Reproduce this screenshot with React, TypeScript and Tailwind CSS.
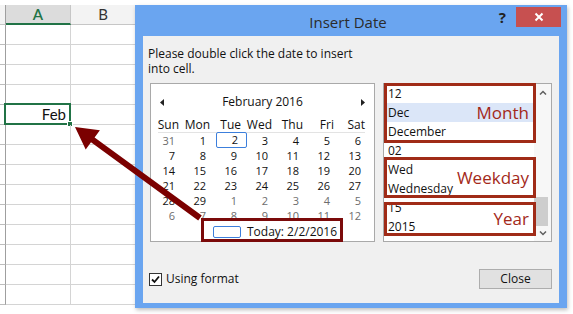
import React from 'react';

const ui = "font-['Segoe_UI','Open_Sans',sans-serif]";

const weeks = [
  [31, 1, 2, 3, 4, 5, 6],
  [7, 8, 9, 10, 11, 12, 13],
  [14, 15, 16, 17, 18, 19, 20],
  [21, 22, 23, 24, 25, 26, 27],
  [28, 29, 1, 2, 3, 4, 5],
  [6, 7, 8, 9, 10, 11, 12],
];

const dayNames = ['Sun', 'Mon', 'Tue', 'Wed', 'Thu', 'Fri', 'Sat'];

function Sheet() {
  const rows = Array.from({ length: 14 }, (_, i) => i + 1);
  return (
    <div className="w-[135px] shrink-0 pt-[5px] bg-white font-['Lato',sans-serif]">
      {/* column headers */}
      <div className="flex h-[20px]">
        <div className="w-[6px] border-r border-[#9f9f9f] border-b border-b-[#c6c6c6] bg-[#f3f3f3]" />
        <div className="w-[65px] bg-[#dcdcdc] border-r border-[#c6c6c6] border-b-2 border-b-[#217346] text-[#217346] text-[15px] leading-[18px] text-center font-semibold">
          A
        </div>
        <div className="w-[64px] bg-[#f3f3f3] border-b border-[#c6c6c6] text-[#333] text-[15px] leading-[19px] text-center">
          B
        </div>
      </div>
      {rows.map((r) => (
        <div key={r} className="flex h-[20px]">
          <div className="w-[6px] border-r border-[#9f9f9f] border-b border-b-[#bdbdbd]" />
          <div className="relative w-[65px] border-r border-b border-[#d4d4d4] text-right pr-[4px] text-[15px] leading-[19px] text-[#111]">
            {r === 5 && (
              <>
                Feb
                <div className="absolute -left-[2px] -top-[2px] w-[67px] h-[22px] border-2 border-[#217346]" />
                <div className="absolute -right-[3px] -bottom-[3px] w-[6px] h-[6px] bg-[#217346] border border-white" />
              </>
            )}
          </div>
          <div className="w-[64px] border-b border-[#d4d4d4]" />
        </div>
      ))}
    </div>
  );
}

function Calendar() {
  return (
    <div className="relative w-[225px] h-[159px] bg-white border border-[#a9a9a9] text-[12px] text-[#111]">
      <div className="mt-[9px] h-[18px] flex items-center justify-between px-[9px]">
        <svg width="4" height="7" viewBox="0 0 4 7">
          <path d="M4 0 L0 3.5 L4 7 Z" fill="#222" />
        </svg>
        <span className="leading-[18px]">February 2016</span>
        <svg width="4" height="7" viewBox="0 0 4 7">
          <path d="M0 0 L4 3.5 L0 7 Z" fill="#222" />
        </svg>
      </div>
      <div className="mt-[6px] grid grid-cols-[repeat(7,31px)] h-[15px]">
        {dayNames.map((d) => (
          <div key={d} className="text-right pr-[3px] text-[12px] leading-[15px]">
            {d}
          </div>
        ))}
      </div>
      <div className="ml-[7px] w-[207px] h-px bg-[#e3e3e3]" />
      {weeks.map((w, wi) => (
        <div key={wi} className="grid grid-cols-[repeat(7,31px)] h-[15px]">
          {w.map((d, di) => {
            const other = (wi === 0 && d > 7) || (wi >= 4 && d < 15);
            const selected = wi === 0 && d === 2;
            return (
              <div
                key={di}
                className={
                  selected
                    ? 'ml-[3px] -mt-px w-[31px] h-[16px] border border-[#3c7fdc] rounded-[2px] text-right pr-[8px] leading-[14px] text-[11px]'
                    : `text-right pr-[7px] leading-[15px] text-[11px] ${other ? 'text-[#6d6d6d]' : ''}`
                }
              >
                {d}
              </div>
            );
          })}
        </div>
      ))}
      <div className="h-[17px] pl-[62px] flex items-center gap-[6px]">
        <div className="w-[28px] h-[12px] border border-[#3c7fdc] rounded-[2px]" />
        <span className="text-[12px] leading-[17px]">Today: 2/2/2016</span>
      </div>
      {/* annotation */}
      <div className="absolute left-[50px] top-[134px] w-[142px] h-[24px] border-[3px] border-[#7b0a0a]" />
    </div>
  );
}

function Formats() {
  const items = ['12', 'Dec', 'December', '02', 'Wed', 'Wednesday', '15', '2015'];
  return (
    <div className="relative w-[169px] h-[159px] bg-white border border-[#a9a9a9] flex text-[12px] text-[#111]">
      <div className="flex-1">
        {items.map((t) => (
          <div
            key={t}
            className={`h-[19px] leading-[19px] pl-[4px] ${t === 'Dec' ? 'bg-[#dbe6f8]' : ''}`}
          >
            {t}
          </div>
        ))}
      </div>
      <div className="w-[17px] bg-[#f7f7f7] flex flex-col items-center">
        <svg className="mt-[6px]" width="8" height="5" viewBox="0 0 8 5">
          <path d="M1 4.5 L4 1.5 L7 4.5" stroke="#606060" strokeWidth="1.5" fill="none" />
        </svg>
        <div className="mt-[102px] w-[14px] h-[29px] bg-[#cdcdcd] self-start" />
        <svg className="mt-[5px]" width="8" height="5" viewBox="0 0 8 5">
          <path d="M1 0.5 L4 3.5 L7 0.5" stroke="#606060" strokeWidth="1.5" fill="none" />
        </svg>
      </div>
      {/* annotations */}
      <div className="absolute left-0 -top-[1px] w-[152px] h-[60px] border-[3px] border-[#a02b17] flex items-center justify-end pr-[4px] text-[#a3291a] text-[17px]">
        Month
      </div>
      <div className="absolute left-0 top-[73px] w-[152px] h-[41px] border-[3px] border-[#a02b17] flex items-center justify-end pr-[4px] text-[#a3291a] text-[17px]">
        Weekday
      </div>
      <div className="absolute left-0 top-[118px] w-[152px] h-[34px] border-[3px] border-[#a02b17] flex items-center justify-end pr-[4px] text-[#a3291a] text-[17px]">
        Year
      </div>
    </div>
  );
}

function Dialog() {
  return (
    <div className={`mt-[5px] w-[432px] h-[303px] bg-[#6aa5f0] flex flex-col shadow-[1px_2px_4px_rgba(0,0,0,0.25)] ${ui}`}>
      {/* title bar */}
      <div className="h-[31px] grid grid-cols-[1fr_auto_1fr] pt-[2px] pr-[6px]">
        <div />
        <div className="pt-[6px] text-[15px] leading-[18px] text-[#2b2b2b]">Insert Date</div>
        <div className="flex justify-end items-start">
          <span className="mt-[1px] text-[15px] font-bold leading-[18px] text-[#222]">?</span>
          <div className="ml-[10px] w-[45px] h-[20px] bg-[#c75050] flex items-center justify-center">
            <svg width="10" height="10" viewBox="0 0 10 10">
              <path d="M1.5 1.5 L8.5 8.5 M8.5 1.5 L1.5 8.5" stroke="white" strokeWidth="2" />
            </svg>
          </div>
        </div>
      </div>
      {/* body */}
      <div className="mx-[8px] mb-[5px] flex-1 bg-[#f0f0f0] flex flex-col text-[#111]">
        <p className="pl-[5px] pt-[10px] text-[12px] leading-[15px] w-[215px]">
          Please double click the date to insert into cell.
        </p>
        <div className="mt-[7px] pl-[7px] flex gap-[8px]">
          <Calendar />
          <Formats />
        </div>
        <div className="mt-[27px] h-[20px] pl-[6px] pr-[7px] flex items-center justify-between text-[12px]">
          <div className="flex items-center gap-[4px]">
            <div className="w-[13px] h-[13px] border border-[#333] bg-white flex items-center justify-center">
              <svg width="9" height="9" viewBox="0 0 9 9">
                <path d="M1 4.5 L3.5 7 L8 1.5" stroke="#111" strokeWidth="1.8" fill="none" />
              </svg>
            </div>
            <span>Using format</span>
          </div>
          <button className="w-[73px] h-[20px] border border-[#adadad] bg-[#e1e1e1] text-[12px] leading-[18px]">
            Close
          </button>
        </div>
      </div>
    </div>
  );
}

export default function App() {
  return (
    <div className="relative w-[573px] h-[314px] overflow-hidden bg-white flex">
      <Sheet />
      <Dialog />
      {/* pointer arrow */}
      <svg className="absolute inset-0 pointer-events-none" width="573" height="314" viewBox="0 0 573 314">
        <polygon
          points="75,127 99.9,130.2 94.6,137.5 201.8,215.6 198.2,220.4 91,142.3 85.7,149.6"
          fill="#7b0000"
        />
      </svg>
    </div>
  );
}
